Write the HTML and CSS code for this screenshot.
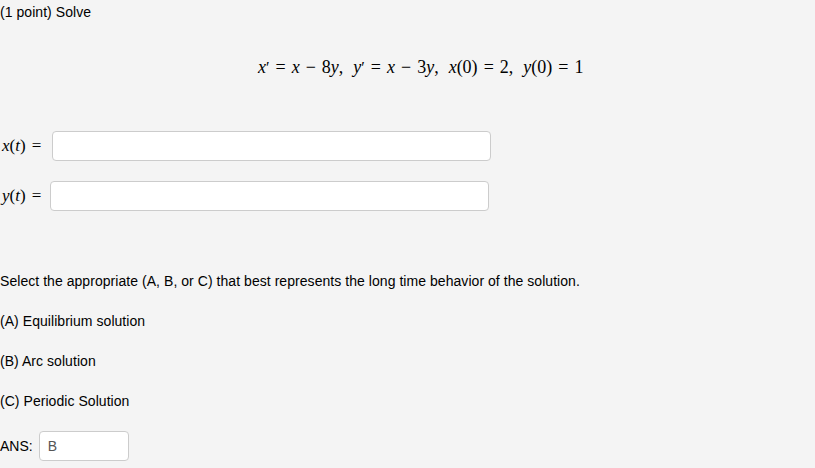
FILE: index.html
```html
<!DOCTYPE html>
<html>
<head>
<meta charset="utf-8">
<link rel="stylesheet" href="styles.css">
</head>
<body>
<div class="page">
  <p class="intro">(1 point) Solve</p>
  <div class="equation">
    <span class="m"><i>x</i><span class="prime">′</span><span class="op">=</span><i>x</i><span class="op">−</span>8<i>y</i>,</span>
    <span class="m"><i>y</i><span class="prime">′</span><span class="op">=</span><i>x</i><span class="op">−</span>3<i>y</i>,</span>
    <span class="m"><i>x</i>(0)<span class="op">=</span>2,</span>
    <span class="m"><i>y</i>(0)<span class="op">=</span>1</span>
  </div>
  <div class="answer-row first">
    <span class="label"><i>x</i>(<i>t</i>)<span class="op">=</span></span>
    <input class="field wide" type="text">
  </div>
  <div class="answer-row">
    <span class="label"><i>y</i>(<i>t</i>)<span class="op">=</span></span>
    <input class="field wide" type="text">
  </div>
  <p class="question">Select the appropriate (A, B, or C) that best represents the long time behavior of the solution.</p>
  <p class="option">(A) Equilibrium solution</p>
  <p class="option">(B) Arc solution</p>
  <p class="option">(C) Periodic Solution</p>
  <div class="ans-row">
    <span>ANS:</span>
    <input class="field small" type="text" value="B">
  </div>
</div>
</body>
</html>
```

FILE: styles.css
```css
html, body {
  margin: 0;
  padding: 0;
  background: #f4f4f4;
}
body {
  font-family: "Liberation Sans", Arial, sans-serif;
  font-size: 14px;
  color: #000;
}
p {
  margin: 0;
  line-height: 20px;
  letter-spacing: 0.05px;
}
.intro {
  padding-top: 2px;
}
.equation {
  font-family: "Liberation Serif", "Times New Roman", serif;
  font-size: 18px;
  margin-top: 33px;
  padding-left: 258px;
  line-height: 24px;
  display: flex;
  gap: 10px;
}
.equation .prime {
  font-size: 16px;
}
.op {
  margin: 0 6px;
}
.answer-row {
  display: flex;
  align-items: center;
  gap: 3px;
  height: 30px;
}
.answer-row.first {
  margin-top: 51px;
  gap: 5px;
}
.answer-row + .answer-row {
  margin-top: 20px;
}
.label {
  font-family: "Liberation Serif", "Times New Roman", serif;
  font-size: 17px;
  padding-left: 2px;
  white-space: nowrap;
}
.field {
  box-sizing: border-box;
  height: 30px;
  border: 1px solid #cccccc;
  border-radius: 4px;
  background: #fff;
  font-family: "Liberation Sans", Arial, sans-serif;
  font-size: 14px;
  color: #555;
  padding: 0 8px;
  outline: none;
}
.field.wide {
  width: 439px;
}
.field.small {
  width: 90px;
}
.question {
  margin-top: 60px;
}
.option {
  margin-top: 20px;
}
.ans-row {
  display: flex;
  align-items: center;
  gap: 6px;
  margin-top: 20px;
  height: 30px;
}
```
